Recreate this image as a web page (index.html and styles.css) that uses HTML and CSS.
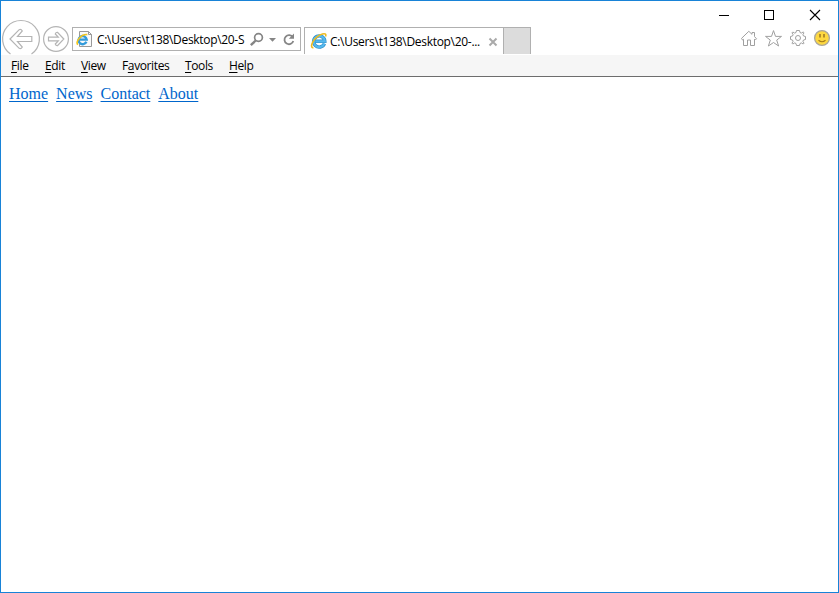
FILE: index.html
```html
<!DOCTYPE html>
<html lang="en">
<head>
    <meta charset="UTF-8">
    <title>Title</title>
    <link rel="stylesheet" href="styles.css">
</head>
<body>
<div class="window">
    <header class="header">
        <svg class="arrows" width="70" height="54" viewBox="1 1 70 54">
            <g fill="none" stroke="#b4b4b4" stroke-width="1.2">
                <path d="M10.5 54A18.4 18.4 0 1 1 31.5 54"/>
                <path d="M10 39L19.2 29.7Q21 28.7 22.3 31L17.5 36.5H31.8V41.5H17.5L22.3 47Q21 49.3 19.2 48.3Z"/>
                <circle cx="56" cy="39" r="12.4"/>
                <path d="M63.8 39L57.5 32.3Q56 32 55.3 34L58.3 37.2H48.5V40.8H58.3L55.3 44Q56 46 57.5 45.7Z"/>
            </g>
        </svg>
        <div class="address">
            <svg class="page-icon" width="17" height="18" viewBox="0 0 17 18">
                <path d="M3.5 1.5h9l3 3v12h-12z" fill="#fafafa" stroke="#999"/>
                <path d="M12.5 1.5v3h3" fill="none" stroke="#999"/>
                <path d="M10.4 11.8A4.1 4.1 0 1 1 10.7 9.6H4" fill="none" stroke="#329bdb" stroke-width="2.4"/>
                <path d="M2 14.6C-1.2 12.8 4.5 4 11.3 4.6" fill="none" stroke="#f3c51c" stroke-width="1.6"/>
            </svg>
            <span class="url">C:\Users\t138\Desktop\20-S</span>
            <svg class="address-tools" width="54" height="24" viewBox="246 27 54 24">
                <g fill="none" stroke="#858585">
                    <circle cx="258.5" cy="37.5" r="3.9" stroke-width="1.7"/>
                    <path d="M255.7 40.5L250.8 45.2" stroke-width="2.4"/>
                    <path d="M292.8 37.3A4.5 4.5 0 1 0 293.3 41" stroke-width="1.8"/>
                </g>
                <path d="M269 38h7l-3.5 3.8zM294 33.5v5.2h-5.2z" fill="#858585"/>
            </svg>
        </div>
        <div class="tab">
            <svg class="ie-icon" width="18" height="18" viewBox="0 0 18 18">
                <path d="M14.4 11.6A5.6 5.6 0 1 1 14.8 9.3H5.5" fill="none" stroke="#2f8fc9" stroke-width="3.4"/>
                <path d="M14.4 11.6A5.6 5.6 0 1 1 14.8 9.3H5.5" fill="none" stroke="#55b9ee" stroke-width="2.2"/>
                <path d="M3.4 16C-1.6 15.8 4 4.5 12.5 2C15.5 1.2 16.4 2.4 15.6 4.6" fill="none" stroke="#edba20" stroke-width="1.6"/>
            </svg>
            <span class="tab-title">C:\Users\t138\Desktop\20-...</span>
            <svg class="tab-close" width="10" height="10" viewBox="0 0 10 10">
                <path d="M1.5 1.5l7 7M8.5 1.5l-7 7" stroke="#aaa" stroke-width="2"/>
            </svg>
        </div>
        <div class="new-tab"></div>
        <div class="right">
            <svg class="controls" width="138" height="27" viewBox="700 1 138 27">
                <path d="M719 15.5h10" stroke="#000"/>
                <rect x="764.5" y="10.5" width="9" height="9" fill="none" stroke="#000"/>
                <path d="M810 10l10 10M820 10l-10 10" stroke="#000" stroke-width="1.1"/>
            </svg>
            <svg class="tools" width="138" height="24" viewBox="700 28 138 24">
                <g fill="none" stroke="#a0a0a0" stroke-linejoin="round">
                    <path d="M741.5 38.4L748.8 31.3L752 34.3V32.5H754.5V36.5L756.5 38.8L755.3 40L754.5 39.2V45.5H750.5V40H747.5V45.5H743.5V39.3L742.5 40Z"/>
                    <path d="M773.5 30.6L775.5 36.4H781.5L776.7 40.1L778.6 46L773.5 42.5L768.4 46L770.3 40.1L765.5 36.4H771.5Z"/>
                    <circle cx="798" cy="38" r="2.5"/>
                    <path transform="translate(798 38)" d="M-1.5-7.5H1.5L2-5.5L3.3-4.9L5.2-6L6-5.2L4.9-3.3L5.5-2L7.5-1.5V1.5L5.5 2L4.9 3.3L6 5.2L5.2 6L3.3 4.9L2 5.5L1.5 7.5H-1.5L-2 5.5L-3.3 4.9L-5.2 6L-6 5.2L-4.9 3.3L-5.5 2L-7.5 1.5V-1.5L-5.5-2L-4.9-3.3L-6-5.2L-5.2-6L-3.3-4.9L-2-5.5Z"/>
                </g>
                <circle cx="822" cy="38" r="7.4" fill="#fdd841" stroke="#aaa69c" stroke-width="1.3"/>
                <path d="M820 34v3.5M824 34v3.5" stroke="#9a7420" stroke-width="1.5"/>
                <path d="M818.5 40.3q3.5 2.8 7 0" fill="none" stroke="#a67c18" stroke-width="1.1"/>
            </svg>
        </div>
    </header>
    <nav class="menu">
        <span><u>F</u>ile</span>
        <span><u>E</u>dit</span>
        <span><u>V</u>iew</span>
        <span>F<u>a</u>vorites</span>
        <span><u>T</u>ools</span>
        <span><u>H</u>elp</span>
    </nav>
    <main class="content">
        <a href="#">Home</a>
        <a href="#">News</a>
        <a href="#">Contact</a>
        <a href="#">About</a>
    </main>
</div>
</body>
</html>
```
FILE: styles.css
```css
*{ box-sizing: border-box;}
body{ margin: 0; background: #fff; color: #000;}
svg{ display: block; flex: none;}
.window{ height: 593px; border: 1px solid #1883d7; overflow: hidden; font: 12px/16px "Open Sans", "Noto Sans", sans-serif;}

.header{ display: flex; height: 54px;}
.arrows{ margin-right: 1px;}
.address{ display: flex; width: 229px; height: 24px; margin-top: 26px; border: 1px solid #b0b0b0;}
.page-icon{ margin: 2px 0 0 3px;}
.url{ width: 149px; margin: 4px 0 0 4px; white-space: nowrap; letter-spacing: -.32px;}
.address-tools{ margin-top: -1px;}
.tab{ display: flex; width: 200px; height: 27px; margin: 26px 0 0 3px; border: 1px solid #b0b0b0; border-bottom: 0;}
.ie-icon{ margin: 4px 0 0 5px;}
.tab-title{ width: 155px; margin: 6px 0 0 2px; white-space: nowrap; letter-spacing: -.3px;}
.tab-close{ margin: 9px 0 0 3px;}
.new-tab{ width: 27px; height: 27px; margin-top: 26px; background: #dcdcdc; border: 1px solid #b0b0b0; border-width: 1px 1px 0 0;}
.right{ margin-left: auto;}

.menu{ display: grid; grid-template-columns: 34px 36px 41px 63px 44px 40px; height: 22px; padding: 3px 0 0 10px; background: #f6f6f6; border-bottom: 1px solid #6d6d6d; letter-spacing: -.38px;}
.menu u{ text-underline-offset: 2px; text-decoration-thickness: 1px;}

.content{ display: flex; gap: 8px; padding: 8px; font: 16px/18px "Liberation Serif", serif;}
.content a{ color: #0066cc; text-decoration-thickness: 1px; text-underline-offset: 2px;}
```
